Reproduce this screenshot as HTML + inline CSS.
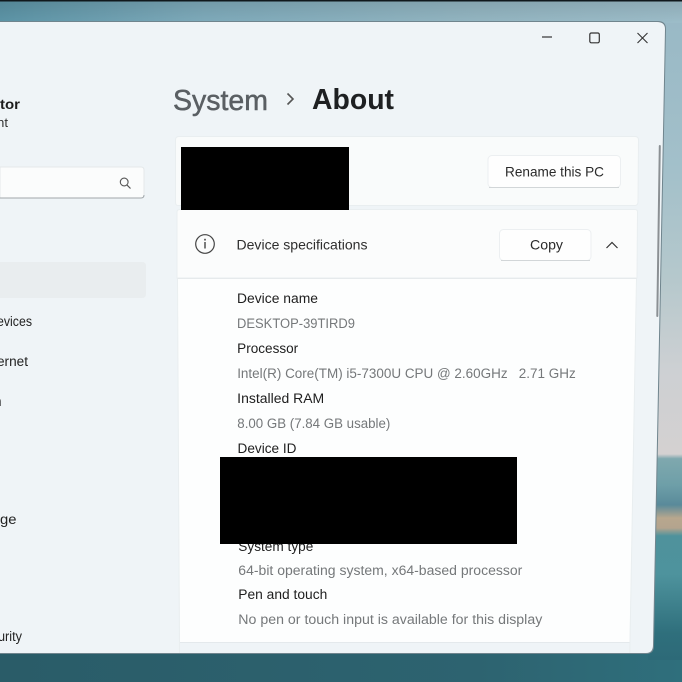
<!DOCTYPE html>
<html><head><meta charset="utf-8"><style>
html,body{margin:0;padding:0;width:682px;height:682px;overflow:hidden;background:#000}
svg{display:block}
text{font-family:"Liberation Sans",sans-serif;filter:blur(.3px)}
</style></head><body>
<svg width="682" height="682" viewBox="0 0 682 682" xmlns="http://www.w3.org/2000/svg">
<defs>
<linearGradient id="top" x1="0" y1="0" x2="1" y2="0"><stop offset="0" stop-color="#5c94a6"/><stop offset=".3" stop-color="#7eaaba"/><stop offset=".7" stop-color="#93b5c1"/><stop offset="1" stop-color="#9cbcc8"/></linearGradient>
<linearGradient id="topv" x1="0" y1="0" x2="0" y2="1"><stop offset="0" stop-color="#000" stop-opacity=".1"/><stop offset="1" stop-color="#000" stop-opacity="0"/></linearGradient>
<linearGradient id="right" x1="0" y1="0" x2="0" y2="1">
<stop offset="0" stop-color="#98b8c5"/><stop offset=".26" stop-color="#a3c0ca"/><stop offset=".42" stop-color="#b5c8cc"/><stop offset=".56" stop-color="#cdd0d3"/><stop offset=".688" stop-color="#d4d1d1"/><stop offset=".695" stop-color="#7fa8ae"/><stop offset=".735" stop-color="#6e9fa8"/><stop offset=".765" stop-color="#5a8a9a"/><stop offset=".785" stop-color="#b8a78e"/><stop offset=".8" stop-color="#b4a48e"/><stop offset=".812" stop-color="#4f929c"/><stop offset=".87" stop-color="#4e939d"/><stop offset=".96" stop-color="#2f6f7c"/><stop offset="1" stop-color="#2d6a78"/></linearGradient>
<linearGradient id="bottom" x1="0" y1="0" x2="1" y2="0"><stop offset="0" stop-color="#2a5c68"/><stop offset=".7" stop-color="#2d6370"/><stop offset="1" stop-color="#2f6f7c"/></linearGradient>
</defs>
<rect x="0" y="0" width="682" height="682" fill="url(#bottom)"/>
<rect x="648" y="0" width="34" height="660" fill="url(#right)"/>
<rect x="0" y="0" width="682" height="23" fill="url(#top)"/>
<rect x="0" y="0" width="682" height="22" fill="url(#topv)"/>
<rect x="0" y="0" width="682" height="1.5" fill="#10181c"/>

<!-- window -->
<path d="M0 21H658Q666 21 666 29L654 646Q654 654 646 654H0Z" fill="#70858e"/>
<path d="M0 22H657Q665 22 665 29L653 645Q653 653 646 653H0Z" fill="#eff4f7"/>

<!-- caption buttons -->
<path d="M542 37H552" stroke="#333" stroke-width="1.2" fill="none"/>
<rect x="589.8" y="33" width="9.5" height="9.8" rx="1.5" stroke="#333" stroke-width="1.2" fill="none"/>
<path d="M637.5 33L647.5 43M647.5 33L637.5 43" stroke="#333" stroke-width="1.1" fill="none"/>

<!-- sidebar text -->
<text x="0" y="109" font-size="13.5" font-weight="bold" fill="#1c1c1c" textLength="20" lengthAdjust="spacingAndGlyphs">tor</text>
<text x="-3" y="127" font-size="13" fill="#333" textLength="11" lengthAdjust="spacingAndGlyphs">nt</text>

<!-- search -->
<path d="M0 167H141Q144 167 144 170V195Q144 198 141 198H0Z" fill="#fbfcfc" stroke="#e4e8ea" stroke-width="1"/>
<path d="M0 198H141Q144 198 144 195" fill="none" stroke="#a0a6aa" stroke-width="1"/>
<circle cx="124.2" cy="182" r="3.9" fill="none" stroke="#555" stroke-width="1.1"/>
<path d="M127 185L130.5 188.5" stroke="#555" stroke-width="1.2"/>

<!-- selected nav -->
<path d="M0 262H142Q146 262 146 266V294Q146 298 142 298H0Z" fill="#e9edef"/>

<text x="-3" y="326" font-size="13.5" fill="#222" textLength="35" lengthAdjust="spacingAndGlyphs">evices</text>
<text x="-3" y="366" font-size="13.5" fill="#222" textLength="31" lengthAdjust="spacingAndGlyphs">ernet</text>
<text x="-6" y="406" font-size="13.5" fill="#222">n</text>
<text x="0" y="524" font-size="13.5" fill="#222" textLength="16.500" lengthAdjust="spacingAndGlyphs">ge</text>
<text x="-2" y="641" font-size="13.5" fill="#222" textLength="24" lengthAdjust="spacingAndGlyphs">urity</text>

<!-- heading -->
<text x="173" y="110" font-size="29" fill="#5a5f63" stroke="#5a5f63" stroke-width=".5" textLength="95" lengthAdjust="spacingAndGlyphs">System</text>
<path d="M287.5 93.5L293 99L287.5 104.5" fill="none" stroke="#555" stroke-width="1.6"/>
<text x="312" y="109" font-size="29" font-weight="bold" fill="#1e2022" textLength="82" lengthAdjust="spacingAndGlyphs">About</text>

<!-- PC card -->
<path d="M179 136.500H635Q638.500 136.500 638.500 140L638 202Q638 205.500 634.500 205.500H178Q175.500 205.500 175.500 202V140Q175.500 136.500 179 136.500Z" fill="#f9fbfb" stroke="#e9eef0"/>
<rect x="488" y="155.500" width="132.500" height="32" rx="4" fill="#fefefe" stroke="#eceff1"/>
<path d="M489 187.500H619" stroke="#d2d6d8"/>
<text x="505" y="176.500" font-size="14" fill="#2a2a2a" textLength="99" lengthAdjust="spacingAndGlyphs">Rename this PC</text>

<!-- device spec card -->
<path d="M180 209.500H635Q637.500 209.500 637.500 212L637 278H177V212Q177 209.500 180 209.500Z" fill="#fbfcfc" stroke="#e9eef0"/>
<path d="M177 278.500H637L629.500 642.500H180Z" fill="#fdfefe"/>
<path d="M177 278.500H637" stroke="#e6eaec"/>
<path d="M177.500 278.500L179.500 653" stroke="#e9eef0" fill="none"/>
<path d="M636.500 278.500L629.800 653" stroke="#e9eef0" fill="none"/>
<path d="M180 642.500H629.500" stroke="#e4e9ec"/>

<rect x="181" y="147" width="168" height="63" fill="#000"/>

<circle cx="205" cy="244" r="9.300" fill="none" stroke="#444" stroke-width="1.200"/>
<rect x="204.300" y="242" width="1.400" height="6.500" fill="#444"/>
<rect x="204.200" y="238.800" width="1.600" height="1.700" fill="#444"/>
<text x="236.500" y="249.500" font-size="14" fill="#2e2e2e" textLength="131" lengthAdjust="spacingAndGlyphs">Device specifications</text>

<rect x="499.500" y="229.500" width="91.500" height="31" rx="4" fill="#fefefe" stroke="#eceff1"/>
<path d="M501 260.500H590" stroke="#d2d6d8"/>
<text x="530" y="249.500" font-size="14" fill="#2a2a2a" textLength="33" lengthAdjust="spacingAndGlyphs">Copy</text>
<path d="M606.500 248L612 242.500L617.500 248" fill="none" stroke="#333" stroke-width="1.200"/>

<!-- specs -->
<g font-size="13.5" fill="#1e1e1e">
<text x="237" y="303" textLength="81" lengthAdjust="spacingAndGlyphs">Device name</text>
<text x="237.200" y="353" textLength="61" lengthAdjust="spacingAndGlyphs">Processor</text>
<text x="237.200" y="403" textLength="87" lengthAdjust="spacingAndGlyphs">Installed RAM</text>
<text x="237.500" y="453" textLength="59" lengthAdjust="spacingAndGlyphs">Device ID</text>
<text x="238.300" y="551" textLength="75" lengthAdjust="spacingAndGlyphs">System type</text>
<text x="238.300" y="599" textLength="89" lengthAdjust="spacingAndGlyphs">Pen and touch</text>
</g>
<g font-size="13.500" fill="#75787a">
<text x="237" y="328" textLength="118" lengthAdjust="spacingAndGlyphs">DESKTOP-39TIRD9</text>
<text x="237.200" y="378" textLength="338.500" lengthAdjust="spacingAndGlyphs" xml:space="preserve">Intel(R) Core(TM) i5-7300U CPU @ 2.60GHz   2.71 GHz</text>
<text x="237.300" y="428" textLength="153" lengthAdjust="spacingAndGlyphs">8.00 GB (7.84 GB usable)</text>
<text x="238.300" y="575" textLength="284" lengthAdjust="spacingAndGlyphs">64-bit operating system, x64-based processor</text>
<text x="238.300" y="624" textLength="304" lengthAdjust="spacingAndGlyphs">No pen or touch input is available for this display</text>
</g>
<rect x="220" y="457" width="297" height="87" fill="#000"/>

<!-- scrollbar -->
<path d="M659.800 146L657.300 316" stroke="#8b9094" stroke-width="2" fill="none" stroke-linecap="round"/>
</svg>
</body></html>
